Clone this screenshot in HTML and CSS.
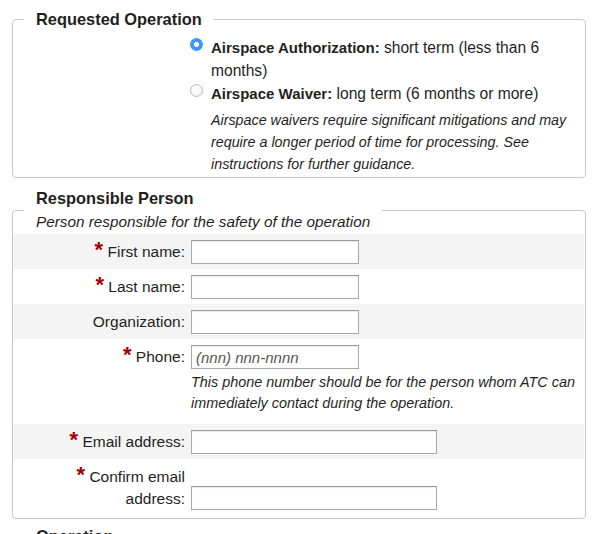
FILE: index.html
```html
<!DOCTYPE html>
<html lang="en">
<head>
<meta charset="utf-8">
<title>Airspace Request</title>
<link rel="stylesheet" href="styles.css">
</head>
<body>
<div class="page">
  <fieldset class="group group-operation">
    <legend class="group-title">Requested Operation</legend>
    <div class="choices">
      <label class="choice">
        <input type="radio" name="op" class="radio" checked>
        <span class="choice-text"><b>Airspace Authorization:</b> short term (less than 6 months)</span>
      </label>
      <label class="choice">
        <input type="radio" name="op" class="radio">
        <span class="choice-text"><b>Airspace Waiver:</b> long term (6 months or more)</span>
      </label>
      <p class="choice-note">Airspace waivers require significant mitigations and may require a longer period of time for processing. See instructions for further guidance.</p>
    </div>
  </fieldset>

  <fieldset class="group group-person">
    <legend class="group-title group-title-desc">
      <span class="title-main">Responsible Person</span>
      <span class="title-desc">Person responsible for the safety of the operation</span>
    </legend>
    <div class="row alt">
      <label class="row-label"><span class="req">*</span> First name:</label>
      <div class="row-field"><input type="text" class="text-input"></div>
    </div>
    <div class="row">
      <label class="row-label"><span class="req">*</span> Last name:</label>
      <div class="row-field"><input type="text" class="text-input"></div>
    </div>
    <div class="row alt">
      <label class="row-label">Organization:</label>
      <div class="row-field"><input type="text" class="text-input"></div>
    </div>
    <div class="row row-help">
      <label class="row-label"><span class="req">*</span> Phone:</label>
      <div class="row-field">
        <input type="text" class="text-input" placeholder="(nnn) nnn-nnnn">
        <p class="help">This phone number should be for the person whom ATC can immediately contact during the operation.</p>
      </div>
    </div>
    <div class="row alt">
      <label class="row-label"><span class="req">*</span> Email address:</label>
      <div class="row-field"><input type="text" class="text-input wide"></div>
    </div>
    <div class="row row-end">
      <label class="row-label two-line"><span class="req">*</span> Confirm email address:</label>
      <div class="row-field"><input type="text" class="text-input wide"></div>
    </div>
  </fieldset>

  <fieldset class="group group-next">
    <legend class="group-title">Operation</legend>
  </fieldset>
</div>
</body>
</html>
```

FILE: styles.css
```css
html, body {
  margin: 0;
  padding: 0;
  background: #ffffff;
}

body {
  font-family: "Liberation Sans", Arial, Helvetica, sans-serif;
  font-size: 15px;
  color: #1f1f1f;
  overflow: hidden;
}

.page {
  padding: 8px 14px 0 12px;
}

.group {
  margin: 0;
  border: 1px solid #c9c9c9;
  border-radius: 4px;
  padding: 0 1px;
  min-width: 0;
}

.group-title {
  margin-left: 10px;
  padding: 0 12px;
  font-weight: bold;
  font-size: 16.4px;
  line-height: 22px;
}

.group-operation {
  padding: 6px 1px 2px;
}

.choices {
  margin-left: 176px;
}

.choice {
  display: flex;
  align-items: flex-start;
  gap: 8px;
  line-height: 23px;
  font-size: 15.6px;
}

.radio {
  -webkit-appearance: none;
  appearance: none;
  flex: none;
  width: 13px;
  height: 13px;
  margin: 2px 0 0 0;
  border-radius: 50%;
  border: 1px solid #b9b9b9;
  background: linear-gradient(#ffffff, #f3f3f3);
  box-sizing: border-box;
}

.radio:checked {
  border: none;
  background: radial-gradient(circle at 50% 50%, #ffffff 0 2.3px, #3c98f6 2.8px);
}

.choice-text b {
  font-weight: bold;
  font-size: 15px;
}

.choice-note {
  margin: 4px 0 0 21px;
  font-style: italic;
  font-size: 14.3px;
  line-height: 22px;
}

.group-person {
  margin-top: 9px;
  padding: 0 1px 0;
}

.group-title-desc {
  display: flex;
  flex-direction: column;
}

.title-main {
  line-height: 22px;
}

.title-desc {
  font-weight: normal;
  font-style: italic;
  font-size: 15.3px;
  line-height: 25px;
}

.row {
  display: flex;
  align-items: flex-start;
  gap: 6px;
  padding: 6px 0 5px;
}

.row.alt {
  background: #f4f4f4;
}

.row-help {
  padding-bottom: 10px;
}

.row-end {
  align-items: flex-end;
  padding: 7px 0 8px;
}

.row-label {
  flex: none;
  width: 171px;
  text-align: right;
  font-size: 15.5px;
  line-height: 24px;
}

.row-label.two-line {
  line-height: 22px;
  padding-left: 52px;
  box-sizing: border-box;
}

.req {
  color: #a30000;
  font-weight: bold;
  font-size: 22px;
  line-height: 0;
}

.row-field {
  flex: 1;
  min-width: 0;
}

.text-input {
  display: block;
  box-sizing: border-box;
  width: 168px;
  height: 24px;
  margin: 0;
  padding: 0 4px;
  border: 1px solid #a9a9a9;
  border-top-color: #9a9a9a;
  border-radius: 0;
  box-shadow: inset 0 1px 1px rgba(0, 0, 0, 0.08);
  background: #ffffff;
  font-family: "Liberation Sans", Arial, Helvetica, sans-serif;
  font-size: 15px;
  color: #222222;
}

.text-input.wide {
  width: 246px;
}

.text-input::placeholder {
  color: #555555;
  font-style: italic;
}

.help {
  margin: 3px 0 0;
  font-style: italic;
  font-size: 14.4px;
  line-height: 21px;
}

.group-next {
  margin-top: 6px;
  height: 40px;
}
```
